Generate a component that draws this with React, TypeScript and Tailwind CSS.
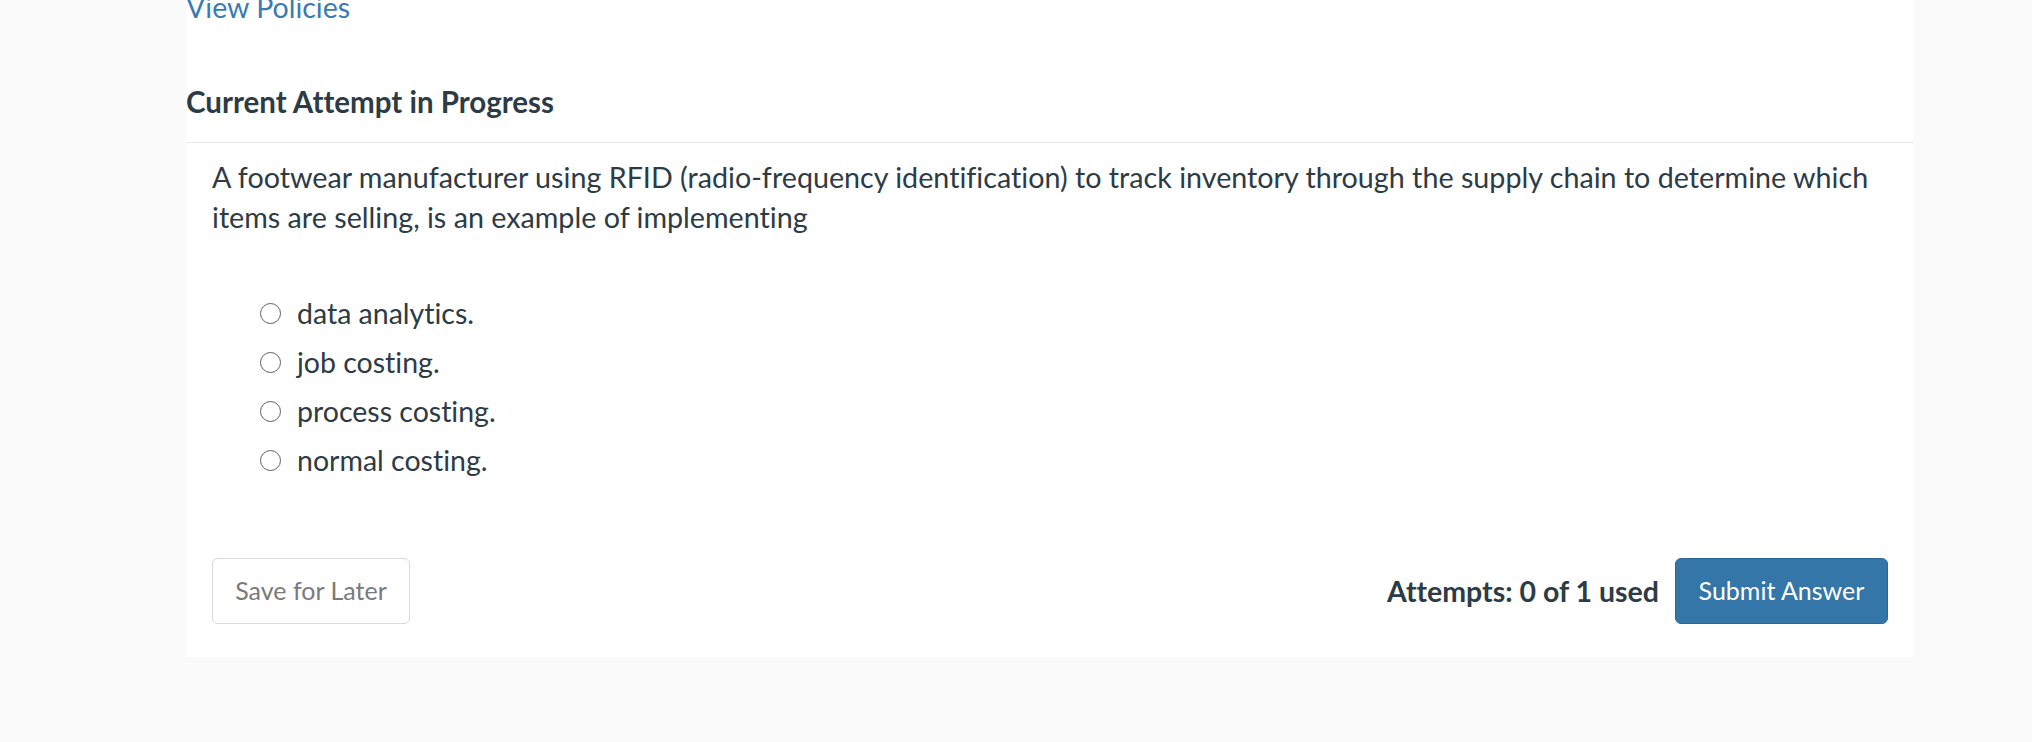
const OPTIONS = [
  "data analytics.",
  "job costing.",
  "process costing.",
  "normal costing.",
];

function RadioOption({ label }: { label: string }) {
  return (
    <label className="flex h-[49px] items-center gap-[16px] cursor-pointer">
      <span className="block h-[21px] w-[21px] rounded-full border-[1.5px] border-[#5f5f5f] bg-white" />
      <span>{label}</span>
    </label>
  );
}

export default function App() {
  return (
    <div
      className="min-h-screen w-full overflow-hidden bg-[#fafafa] text-[#2d3b45] [font-variant-ligatures:none]"
      style={{ fontFamily: "Lato, 'Open Sans', sans-serif" }}
    >
      <div className="ml-[186px] w-[1728px] bg-white">
        {/* policies link, scrolled partly out of view */}
        <div className="-mt-[13px] h-[40px] text-[28.5px] leading-[40px]">
          <a href="#" className="text-[#3a7bb3]">
            View Policies
          </a>
        </div>

        <div className="mt-[58px] border-b border-[#e8e8e8] pb-[23px]">
          <h2 className="text-[29.5px] font-bold leading-[34px]">
            Current Attempt in Progress
          </h2>
        </div>

        <div className="px-[26px] pt-[14px] pb-[33px]">
          <p className="text-[28.7px] leading-[40px]">
            A footwear manufacturer using RFID (radio-frequency identification)
            to track inventory through the supply chain to determine which
            items are selling, is an example of implementing
          </p>

          <div className="mt-[52px] pl-[48px] text-[28.5px]">
            {OPTIONS.map((opt) => (
              <RadioOption key={opt} label={opt} />
            ))}
          </div>

          <div className="mt-[73px] flex items-center justify-between">
            <button
              type="button"
              className="h-[66px] w-[198px] rounded-[6px] border border-[#d9d9d9] bg-white text-[25px] text-[#7a7a7a]"
            >
              Save for Later
            </button>
            <div className="flex items-center gap-[16px]">
              <span className="text-[28.5px] font-bold">Attempts: 0 of 1 used</span>
              <button
                type="button"
                className="h-[66px] w-[213px] rounded-[6px] border border-[#2c6796] bg-[#3576a8] text-[25px] text-white"
              >
                Submit Answer
              </button>
            </div>
          </div>
        </div>
      </div>
    </div>
  );
}
